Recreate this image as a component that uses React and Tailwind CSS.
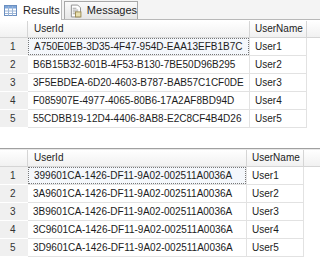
import React from "react";

const top = [
  "A750E0EB-3D35-4F47-954D-EAA13EFB1B7C",
  "B6B15B32-601B-4F53-B130-7BE50D96B295",
  "3F5EBDEA-6D20-4603-B787-BAB57C1CF0DE",
  "F085907E-4977-4065-80B6-17A2AF8BD94D",
  "55CDBB19-12D4-4406-8AB8-E2C8CF4B4D26",
];

const bottom = [
  "399601CA-1426-DF11-9A02-002511A0036A",
  "3A9601CA-1426-DF11-9A02-002511A0036A",
  "3B9601CA-1426-DF11-9A02-002511A0036A",
  "3C9601CA-1426-DF11-9A02-002511A0036A",
  "3D9601CA-1426-DF11-9A02-002511A0036A",
];

function GridIcon() {
  return (
    <svg width="13" height="11" viewBox="0 0 13 11">
      <rect x="0.5" y="0.5" width="12" height="10" fill="#fff" stroke="#6b8fc0" />
      <rect x="1" y="1" width="11" height="2.5" fill="#7ea6da" />
      <path d="M4.5 1v9.5M8.5 1v9.5M1 6h11M1 8.5h11" stroke="#9bb4d6" strokeWidth="1" />
    </svg>
  );
}

function MsgIcon() {
  return (
    <svg width="13" height="14" viewBox="0 0 13 14">
      <path d="M1.5 0.5h7l3 3v10h-10z" fill="#fff" stroke="#8a8a8a" />
      <path d="M3 4h4M3 6h6M3 8h6M3 10h6" stroke="#9a9a9a" />
      <rect x="6" y="8" width="6" height="5.5" fill="#e8e0b0" stroke="#9a8a50" />
    </svg>
  );
}

function Grid({ rows, idW, focus }) {
  return (
    <div>
      <div className="flex h-[17px] bg-gradient-to-b from-white to-[#f1f1f1] border-b border-[#d5d5d5]">
        <div className="w-[28px] border-r border-[#d5d5d5]" />
        <div className={`${idW} border-r border-[#d5d5d5] pl-[6px] leading-[16px]`}>UserId</div>
        <div className="w-[57px] border-r border-[#d5d5d5] pl-[5px] leading-[16px]">UserName</div>
      </div>
      {rows.map((id, i) => (
        <div key={id} className="flex h-[18px]">
          <div className="w-[28px] bg-[#f0f0f0] border-b border-white pl-[10px] leading-[17px] text-[#333]">{i + 1}</div>
          <div className={`${idW} border-b border-r border-[#e2e2e2] leading-[17px]`}>
            <div className={`h-[17px] pl-[5px] ${focus && i === 0 ? "border border-dotted border-[#777] bg-[#f4f7fb] leading-[15px] pl-[4px]" : ""}`}>{id}</div>
          </div>
          <div className="w-[57px] border-b border-r border-[#e2e2e2] pl-[5px] leading-[17px]">User{i + 1}</div>
        </div>
      ))}
    </div>
  );
}

export default function App() {
  return (
    <div className="w-[320px] h-[263px] bg-white overflow-hidden text-[10px] text-[#1c1c1c] font-['Liberation_Sans',Arial,sans-serif]">
      <div className="flex items-end h-[20px] bg-[#f4f4f4] border-b border-[#b8b8b8]">
        <div className="flex items-center gap-[6px] h-[20px] w-[62px] bg-white border-r border-[#b8b8b8] pl-[4px] -mb-px text-[11px]">
          <GridIcon />
          <span>Results</span>
        </div>
        <div className="flex items-center gap-[5px] h-[18px] w-[74px] ml-[2px] bg-gradient-to-b from-[#fafafa] to-[#e6e6e6] border border-b-0 border-[#a8a8a8] pl-[5px] text-[11px]">
          <MsgIcon />
          <span>Messages</span>
        </div>
      </div>
      <div className="pt-px">
        <Grid rows={top} idW="w-[222px]" focus />
      </div>
      <div className="h-[20px]" />
      <div className="h-[2px] border-t border-[#a0a0a0] bg-[#e8e8e8]" />
      <Grid rows={bottom} idW="w-[219px]" focus />
    </div>
  );
}
